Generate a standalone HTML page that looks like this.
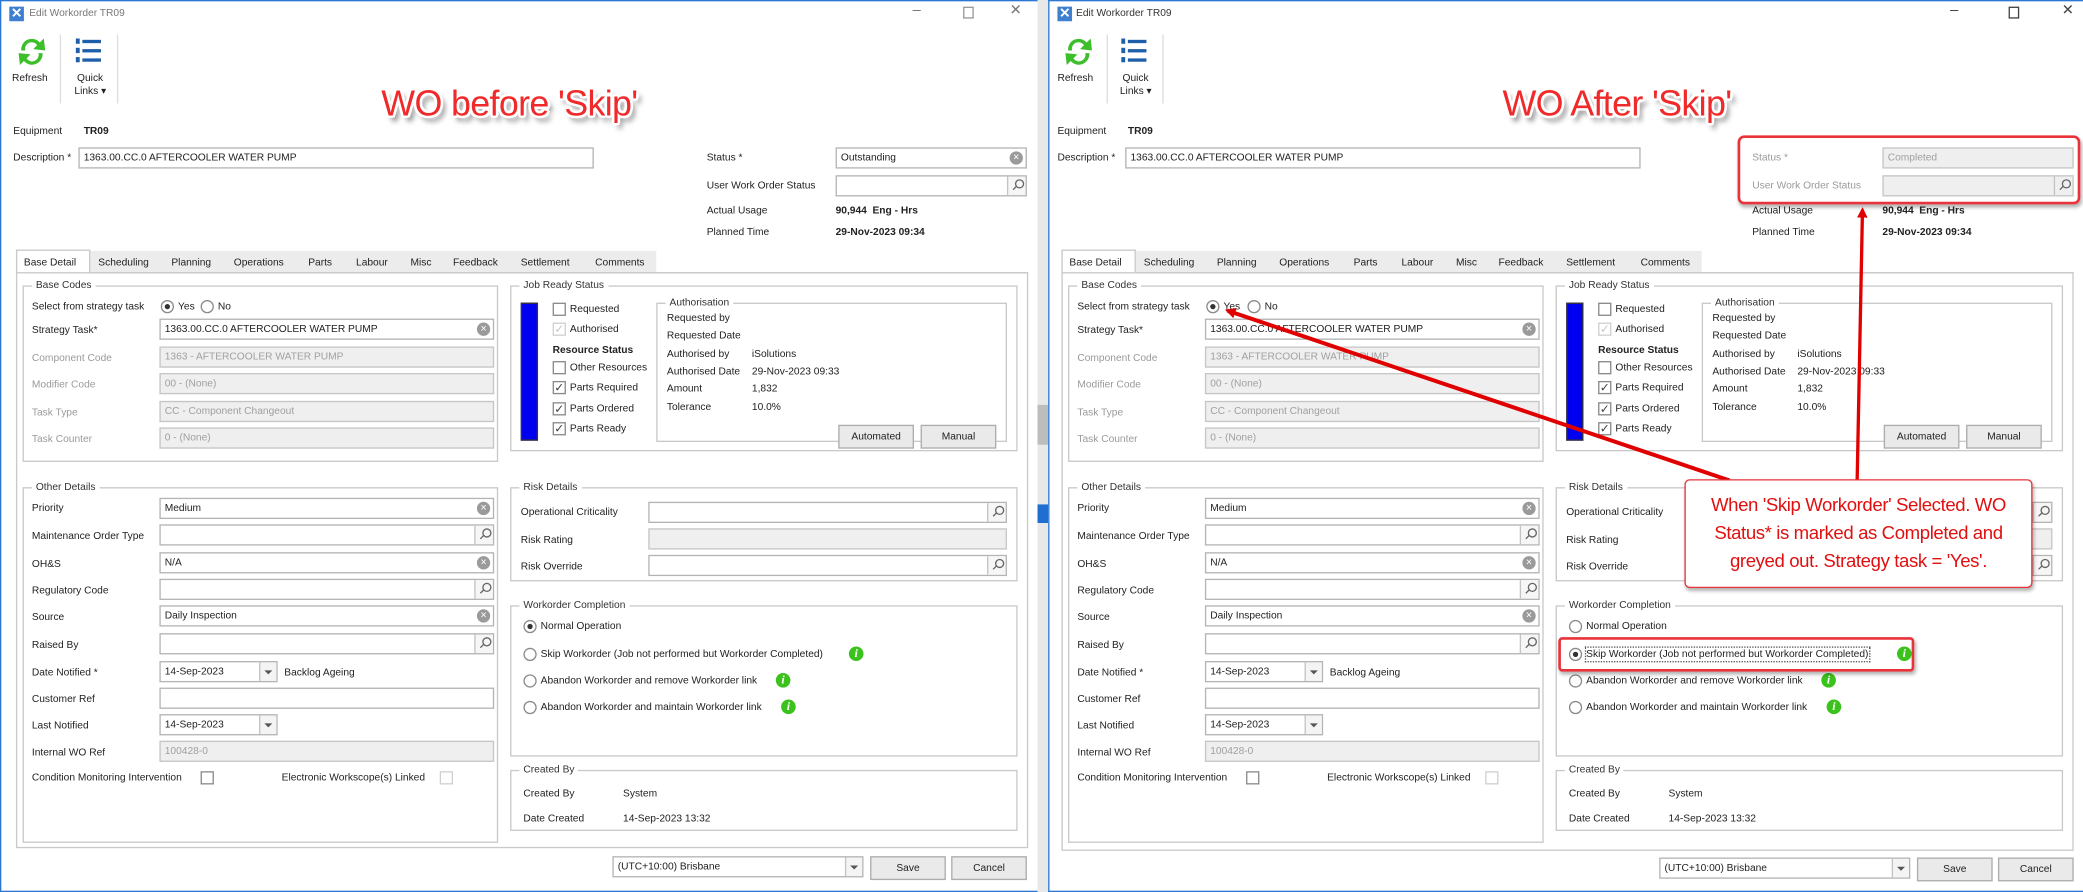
<!DOCTYPE html>
<html><head><meta charset="utf-8">
<style>
*{box-sizing:border-box;margin:0;padding:0}
html,body{width:2083px;height:892px;overflow:hidden;background:#fff}
#s{position:absolute;left:0;top:0;width:1568px;height:672px;transform:scale(1.32844,1.3274);transform-origin:0 0;font-family:"Liberation Sans",sans-serif;font-size:7.7px;color:#222}
.w{position:absolute;top:0;height:672px;background:#fff;border-left:1px solid #2b78d4;border-top:1px solid #2b78d4;border-bottom:1px solid #2b78d4;overflow:hidden}
.a{position:absolute;white-space:nowrap;line-height:10px}
.g{color:#9a9a9a}
.b{font-weight:bold}
.in{position:absolute;height:16px;border:1px solid #b4b4b4;background:#fff;line-height:14px;padding-left:3px;white-space:nowrap;overflow:hidden}
.dis{background:#efefef;color:#a0a0a0;border-color:#c6c6c6}
.clr{position:absolute;right:2px;top:2px;width:10px;height:10px;border-radius:50%;background:#9a9a9a;color:#fff;font-size:8px;line-height:10px;text-align:center}
.srch{position:absolute;right:0;top:0;width:14px;height:14px;border-left:1px solid #c4c4c4;background:#f6f6f6}
.srch:after{content:"";position:absolute;left:5px;top:2px;width:5px;height:5px;border:1px solid #666;border-radius:50%}
.srch:before{content:"";position:absolute;left:3px;top:8px;width:4px;height:1px;background:#666;transform:rotate(-45deg)}
.dd{position:absolute;right:0;top:0;width:13px;height:14px;border-left:1px solid #c4c4c4;background:#f4f4f4}
.dd:after{content:"";position:absolute;left:3px;top:6px;border-left:3px solid transparent;border-right:3px solid transparent;border-top:3px solid #555}
.grp{position:absolute;border:1px solid #c9c9c9}
.lg{position:absolute;top:-6px;left:6px;background:#fff;padding:0 3px;line-height:10px;white-space:nowrap;color:#333}
.rd{position:absolute;width:10px;height:10px;border:1px solid #8a8a8a;border-radius:50%;background:#fff}
.rd.on:after{content:"";position:absolute;left:2px;top:2px;width:4px;height:4px;border-radius:50%;background:#333}
.cb{position:absolute;width:10px;height:10px;border:1px solid #8a8a8a;background:#fff;font-size:9px;line-height:8px;text-align:center;color:#444}
.cb.lt{border-color:#d0d0d0;color:#c8c8c8}
.info{position:absolute;width:11px;height:11px;border-radius:50%;background:#3cc21c;color:#fff;font-weight:bold;font-style:italic;font-family:"Liberation Serif",serif;font-size:9px;line-height:11px;text-align:center}
.btn{position:absolute;height:18px;border:1px solid #adadad;background:#eaeaea;text-align:center;line-height:16px}
.tabs{position:absolute;left:11px;top:188px;width:482px;height:16px;background:#ececec}
.tab{position:absolute;top:192px;line-height:10px;white-space:nowrap}
.big{position:absolute;font-size:27px;color:#f02a2a;white-space:nowrap;letter-spacing:-0.5px;text-shadow:2px 0 0 #fff,-2px 0 0 #fff,0 2px 0 #fff,0 -2px 0 #fff,1.5px 1.5px 0 #fff,-1.5px -1.5px 0 #fff,1.5px -1.5px 0 #fff,-1.5px 1.5px 0 #fff,3px 4px 4px rgba(0,0,0,.55)}
</style></head><body><div id="s">

<div style="position:absolute;left:780px;top:0;width:10px;height:672px;background:#e8e8e8"></div>
<div style="position:absolute;left:780px;top:305px;width:10px;height:30px;background:#bdbdbd"></div>
<div style="position:absolute;left:780px;top:380px;width:10px;height:14px;background:#1f6fd0"></div>

<!-- ================= LEFT WINDOW ================= -->
<div class="w" style="left:0;width:781px">
 <div style="position:absolute;left:6px;top:4px;width:11px;height:11px;background:#3f7fd0;color:#fff;font-size:10px;line-height:11px;text-align:center;font-weight:bold">✕</div>
 <div class="a" style="left:21px;top:4px;color:#777">Edit Workorder TR09</div>
 <div class="a" style="left:686px;top:2px;color:#777;font-size:11px">–</div>
 <div style="position:absolute;left:724px;top:4px;width:8px;height:9px;border:1px solid #999"></div>
 <div class="a" style="left:759px;top:2px;color:#777;font-size:11px">✕</div>
 <svg style="position:absolute;left:11px;top:25px" width="24" height="26" viewBox="0 0 24 26"><path d="M4 12 A8 8 0 0 1 18 6 L21 3 L22 12 L13 11 L16 8 A5 5 0 0 0 7 12 Z" fill="#3cbf2a"/><path d="M20 14 A8 8 0 0 1 6 20 L3 23 L2 14 L11 15 L8 18 A5 5 0 0 0 17 14 Z" fill="#3cbf2a"/></svg>
 <div class="a" style="left:8px;top:53px">Refresh</div>
 <div style="position:absolute;left:44px;top:25px;width:1px;height:52px;background:#ddd"></div>
 <svg style="position:absolute;left:56px;top:28px" width="20" height="18"><rect x="0" y="0" width="3" height="4" fill="#1d5fa8"/><rect x="5" y="1" width="14" height="2.5" fill="#1d5fa8"/><rect x="0" y="7" width="3" height="4" fill="#1d5fa8"/><rect x="5" y="8" width="14" height="2.5" fill="#1d5fa8"/><rect x="0" y="14" width="3" height="4" fill="#1d5fa8"/><rect x="5" y="15" width="14" height="2.5" fill="#1d5fa8"/></svg>
 <div class="a" style="left:57px;top:53px">Quick</div>
 <div class="a" style="left:55px;top:63px">Links ▾</div>
 <div style="position:absolute;left:87px;top:25px;width:1px;height:52px;background:#ddd"></div>
 <div class="big" style="left:286px;top:62px">WO before 'Skip'</div>
 <div class="a" style="left:9px;top:93px">Equipment</div><div class="a b" style="left:62px;top:93px">TR09</div>
 <div class="a" style="left:9px;top:113px">Description *</div>
 <div class="in" style="left:58px;top:110px;width:388px">1363.00.CC.0 AFTERCOOLER WATER PUMP</div>
 <div class="a" style="left:531px;top:113px">Status *</div>
 <div class="in" style="left:628px;top:110px;width:144px">Outstanding<span class="clr">×</span></div>
 <div class="a" style="left:531px;top:134px">User Work Order Status</div>
 <div class="in" style="left:628px;top:131px;width:144px"><span class="srch"></span></div>
 <div class="a" style="left:531px;top:153px">Actual Usage</div><div class="a b" style="left:628px;top:153px">90,944&nbsp; Eng - Hrs</div>
 <div class="a" style="left:531px;top:169px">Planned Time</div><div class="a b" style="left:628px;top:169px">29-Nov-2023 09:34</div>
 <div class="tabs"></div>
 <div style="position:absolute;left:11px;top:187px;width:56px;height:18px;background:#fff;border:1px solid #c9c9c9;border-bottom:none"></div>
 <div class="tab" style="left:17px">Base Detail</div><div class="tab" style="left:73px">Scheduling</div><div class="tab" style="left:128px">Planning</div><div class="tab" style="left:175px">Operations</div><div class="tab" style="left:231px">Parts</div><div class="tab" style="left:267px">Labour</div><div class="tab" style="left:308px">Misc</div><div class="tab" style="left:340px">Feedback</div><div class="tab" style="left:391px">Settlement</div><div class="tab" style="left:447px">Comments</div>
 <div style="position:absolute;left:11px;top:204px;width:762px;height:434px;border:1px solid #c9c9c9"></div>
 <div style="position:absolute;left:67px;top:204px;width:706px;height:1px;background:#c9c9c9"></div>
 <div class="grp" style="left:16px;top:214px;width:358px;height:133px"><span class="lg">Base Codes</span></div>
 <div class="a" style="left:23px;top:225px">Select from strategy task</div>
 <div class="rd on" style="left:120px;top:225px"></div><div class="a" style="left:133px;top:225px">Yes</div>
 <div class="rd" style="left:150px;top:225px"></div><div class="a" style="left:163px;top:225px">No</div>
 <div class="a" style="left:23px;top:243px">Strategy Task*</div><div class="in" style="left:119px;top:239px;width:252px">1363.00.CC.0 AFTERCOOLER WATER PUMP<span class="clr">×</span></div>
 <div class="a g" style="left:23px;top:264px">Component Code</div><div class="in dis" style="left:119px;top:260px;width:252px">1363 - AFTERCOOLER WATER PUMP</div>
 <div class="a g" style="left:23px;top:284px">Modifier Code</div><div class="in dis" style="left:119px;top:280px;width:252px">00 - (None)</div>
 <div class="a g" style="left:23px;top:305px">Task Type</div><div class="in dis" style="left:119px;top:301px;width:252px">CC - Component Changeout</div>
 <div class="a g" style="left:23px;top:325px">Task Counter</div><div class="in dis" style="left:119px;top:321px;width:252px">0 - (None)</div>
 <div class="grp" style="left:16px;top:366px;width:358px;height:268px"><span class="lg">Other Details</span></div>
 <div class="a" style="left:23px;top:377px">Priority</div><div class="in" style="left:119px;top:374px;width:252px">Medium<span class="clr">×</span></div>
 <div class="a" style="left:23px;top:398px">Maintenance Order Type</div><div class="in" style="left:119px;top:394px;width:252px"><span class="srch"></span></div>
 <div class="a" style="left:23px;top:419px">OH&amp;S</div><div class="in" style="left:119px;top:415px;width:252px">N/A<span class="clr">×</span></div>
 <div class="a" style="left:23px;top:439px">Regulatory Code</div><div class="in" style="left:119px;top:435px;width:252px"><span class="srch"></span></div>
 <div class="a" style="left:23px;top:459px">Source</div><div class="in" style="left:119px;top:455px;width:252px">Daily Inspection<span class="clr">×</span></div>
 <div class="a" style="left:23px;top:480px">Raised By</div><div class="in" style="left:119px;top:476px;width:252px"><span class="srch"></span></div>
 <div class="a" style="left:23px;top:501px">Date Notified *</div><div class="in" style="left:119px;top:497px;width:89px">14-Sep-2023<span class="dd"></span></div><div class="a" style="left:213px;top:501px">Backlog Ageing</div>
 <div class="a" style="left:23px;top:521px">Customer Ref</div><div class="in" style="left:119px;top:517px;width:252px"></div>
 <div class="a" style="left:23px;top:541px">Last Notified</div><div class="in" style="left:119px;top:537px;width:89px">14-Sep-2023<span class="dd"></span></div>
 <div class="a" style="left:23px;top:561px">Internal WO Ref</div><div class="in dis" style="left:119px;top:557px;width:252px">100428-0</div>
 <div class="a" style="left:23px;top:580px">Condition Monitoring Intervention</div><div class="cb" style="left:150px;top:580px"></div>
 <div class="a" style="left:211px;top:580px">Electronic Workscope(s) Linked</div><div class="cb lt" style="left:330px;top:580px"></div>
 <div class="grp" style="left:383px;top:214px;width:382px;height:125px"><span class="lg">Job Ready Status</span></div>
 <div style="position:absolute;left:391px;top:227px;width:13px;height:104px;background:#0000f0;border:1px solid #333"></div>
 <div class="cb" style="left:415px;top:227px"></div><div class="a" style="left:428px;top:227px">Requested</div>
 <div class="cb lt" style="left:415px;top:242px">✓</div><div class="a" style="left:428px;top:242px">Authorised</div>
 <div class="a b" style="left:415px;top:258px">Resource Status</div>
 <div class="cb" style="left:415px;top:271px"></div><div class="a" style="left:428px;top:271px">Other Resources</div>
 <div class="cb" style="left:415px;top:286px">✓</div><div class="a" style="left:428px;top:286px">Parts Required</div>
 <div class="cb" style="left:415px;top:302px">✓</div><div class="a" style="left:428px;top:302px">Parts Ordered</div>
 <div class="cb" style="left:415px;top:317px">✓</div><div class="a" style="left:428px;top:317px">Parts Ready</div>
 <div class="grp" style="left:493px;top:227px;width:264px;height:105px"><span class="lg">Authorisation</span></div>
 <div class="a" style="left:501px;top:234px">Requested by</div>
 <div class="a" style="left:501px;top:247px">Requested Date</div>
 <div class="a" style="left:501px;top:261px">Authorised by</div><div class="a" style="left:565px;top:261px">iSolutions</div>
 <div class="a" style="left:501px;top:274px">Authorised Date</div><div class="a" style="left:565px;top:274px">29-Nov-2023 09:33</div>
 <div class="a" style="left:501px;top:287px">Amount</div><div class="a" style="left:565px;top:287px">1,832</div>
 <div class="a" style="left:501px;top:301px">Tolerance</div><div class="a" style="left:565px;top:301px">10.0%</div>
 <div class="btn" style="left:630px;top:319px;width:57px">Automated</div>
 <div class="btn" style="left:692px;top:319px;width:57px">Manual</div>
 <div class="grp" style="left:383px;top:366px;width:382px;height:71px"><span class="lg">Risk Details</span></div>
 <div class="a" style="left:391px;top:380px">Operational Criticality</div><div class="in" style="left:487px;top:377px;width:270px"><span class="srch"></span></div>
 <div class="a" style="left:391px;top:401px">Risk Rating</div><div class="in dis" style="left:487px;top:397px;width:270px"></div>
 <div class="a" style="left:391px;top:421px">Risk Override</div><div class="in" style="left:487px;top:417px;width:270px"><span class="srch"></span></div>
 <div class="grp" style="left:383px;top:455px;width:382px;height:114px"><span class="lg">Workorder Completion</span></div>
 <div class="rd on" style="left:393px;top:466px"></div><div class="a" style="left:406px;top:466px">Normal Operation</div>
 <div class="rd" style="left:393px;top:487px"></div><div class="a" style="left:406px;top:487px">Skip Workorder (Job not performed but Workorder Completed)</div><div class="info" style="left:638px;top:486px">i</div>
 <div class="rd" style="left:393px;top:507px"></div><div class="a" style="left:406px;top:507px">Abandon Workorder and remove Workorder link</div><div class="info" style="left:583px;top:506px">i</div>
 <div class="rd" style="left:393px;top:527px"></div><div class="a" style="left:406px;top:527px">Abandon Workorder and maintain Workorder link</div><div class="info" style="left:587px;top:526px">i</div>
 <div class="grp" style="left:383px;top:579px;width:382px;height:46px"><span class="lg">Created By</span></div>
 <div class="a" style="left:393px;top:592px">Created By</div><div class="a" style="left:468px;top:592px">System</div>
 <div class="a" style="left:393px;top:611px">Date Created</div><div class="a" style="left:468px;top:611px">14-Sep-2023 13:32</div>
 <div class="in" style="left:460px;top:644px;width:189px">(UTC+10:00) Brisbane<span class="dd"></span></div>
 <div class="btn" style="left:654px;top:644px;width:57px">Save</div>
 <div class="btn" style="left:715px;top:644px;width:57px">Cancel</div>
</div>

<!-- ================= RIGHT WINDOW ================= -->
<div class="w" style="left:789px;width:779px">
 <div style="position:absolute;left:6px;top:4px;width:11px;height:11px;background:#3f7fd0;color:#fff;font-size:10px;line-height:11px;text-align:center;font-weight:bold">✕</div>
 <div class="a" style="left:20px;top:4px;color:#333">Edit Workorder TR09</div>
 <div class="a" style="left:678px;top:2px;color:#444;font-size:11px">–</div>
 <div style="position:absolute;left:722px;top:4px;width:8px;height:9px;border:1px solid #444"></div>
 <div class="a" style="left:762px;top:2px;color:#444;font-size:11px">✕</div>
 <svg style="position:absolute;left:10px;top:25px" width="24" height="26" viewBox="0 0 24 26"><path d="M4 12 A8 8 0 0 1 18 6 L21 3 L22 12 L13 11 L16 8 A5 5 0 0 0 7 12 Z" fill="#3cbf2a"/><path d="M20 14 A8 8 0 0 1 6 20 L3 23 L2 14 L11 15 L8 18 A5 5 0 0 0 17 14 Z" fill="#3cbf2a"/></svg>
 <div class="a" style="left:6px;top:53px">Refresh</div>
 <div style="position:absolute;left:43px;top:25px;width:1px;height:52px;background:#ddd"></div>
 <svg style="position:absolute;left:54px;top:28px" width="20" height="18"><rect x="0" y="0" width="3" height="4" fill="#1d5fa8"/><rect x="5" y="1" width="14" height="2.5" fill="#1d5fa8"/><rect x="0" y="7" width="3" height="4" fill="#1d5fa8"/><rect x="5" y="8" width="14" height="2.5" fill="#1d5fa8"/><rect x="0" y="14" width="3" height="4" fill="#1d5fa8"/><rect x="5" y="15" width="14" height="2.5" fill="#1d5fa8"/></svg>
 <div class="a" style="left:55px;top:53px">Quick</div>
 <div class="a" style="left:53px;top:63px">Links ▾</div>
 <div style="position:absolute;left:85px;top:25px;width:1px;height:52px;background:#ddd"></div>
 <div class="big" style="left:341px;top:62px">WO After 'Skip'</div>
 <div class="a" style="left:6px;top:93px">Equipment</div><div class="a b" style="left:59px;top:93px">TR09</div>
 <div class="a" style="left:6px;top:113px">Description *</div>
 <div class="in" style="left:57px;top:110px;width:388px">1363.00.CC.0 AFTERCOOLER WATER PUMP</div>
 <div class="a g" style="left:529px;top:113px">Status *</div>
 <div class="in dis" style="left:627px;top:110px;width:144px">Completed</div>
 <div class="a g" style="left:529px;top:134px">User Work Order Status</div>
 <div class="in dis" style="left:627px;top:131px;width:144px"><span class="srch" style="background:#efefef"></span></div>
 <div class="a" style="left:529px;top:153px">Actual Usage</div><div class="a b" style="left:627px;top:153px">90,944&nbsp; Eng - Hrs</div>
 <div class="a" style="left:529px;top:169px">Planned Time</div><div class="a b" style="left:627px;top:169px">29-Nov-2023 09:34</div>
 <div class="tabs" style="left:9px"></div>
 <div style="position:absolute;left:9px;top:187px;width:56px;height:18px;background:#fff;border:1px solid #c9c9c9;border-bottom:none"></div>
 <div class="tab" style="left:15px">Base Detail</div><div class="tab" style="left:71px">Scheduling</div><div class="tab" style="left:126px">Planning</div><div class="tab" style="left:173px">Operations</div><div class="tab" style="left:229px">Parts</div><div class="tab" style="left:265px">Labour</div><div class="tab" style="left:306px">Misc</div><div class="tab" style="left:338px">Feedback</div><div class="tab" style="left:389px">Settlement</div><div class="tab" style="left:445px">Comments</div>
 <div style="position:absolute;left:9px;top:204px;width:762px;height:436px;border:1px solid #c9c9c9"></div>
 <div style="position:absolute;left:65px;top:204px;width:706px;height:1px;background:#c9c9c9"></div>
 <div class="grp" style="left:14px;top:214px;width:358px;height:133px"><span class="lg">Base Codes</span></div>
 <div class="a" style="left:21px;top:225px">Select from strategy task</div>
 <div class="rd on" style="left:118px;top:225px"></div><div class="a" style="left:131px;top:225px">Yes</div>
 <div class="rd" style="left:149px;top:225px"></div><div class="a" style="left:162px;top:225px">No</div>
 <div class="a" style="left:21px;top:243px">Strategy Task*</div><div class="in" style="left:117px;top:239px;width:252px">1363.00.CC.0 AFTERCOOLER WATER PUMP<span class="clr">×</span></div>
 <div class="a g" style="left:21px;top:264px">Component Code</div><div class="in dis" style="left:117px;top:260px;width:252px">1363 - AFTERCOOLER WATER PUMP</div>
 <div class="a g" style="left:21px;top:284px">Modifier Code</div><div class="in dis" style="left:117px;top:280px;width:252px">00 - (None)</div>
 <div class="a g" style="left:21px;top:305px">Task Type</div><div class="in dis" style="left:117px;top:301px;width:252px">CC - Component Changeout</div>
 <div class="a g" style="left:21px;top:325px">Task Counter</div><div class="in dis" style="left:117px;top:321px;width:252px">0 - (None)</div>
 <div class="grp" style="left:14px;top:366px;width:358px;height:268px"><span class="lg">Other Details</span></div>
 <div class="a" style="left:21px;top:377px">Priority</div><div class="in" style="left:117px;top:374px;width:252px">Medium<span class="clr">×</span></div>
 <div class="a" style="left:21px;top:398px">Maintenance Order Type</div><div class="in" style="left:117px;top:394px;width:252px"><span class="srch"></span></div>
 <div class="a" style="left:21px;top:419px">OH&amp;S</div><div class="in" style="left:117px;top:415px;width:252px">N/A<span class="clr">×</span></div>
 <div class="a" style="left:21px;top:439px">Regulatory Code</div><div class="in" style="left:117px;top:435px;width:252px"><span class="srch"></span></div>
 <div class="a" style="left:21px;top:459px">Source</div><div class="in" style="left:117px;top:455px;width:252px">Daily Inspection<span class="clr">×</span></div>
 <div class="a" style="left:21px;top:480px">Raised By</div><div class="in" style="left:117px;top:476px;width:252px"><span class="srch"></span></div>
 <div class="a" style="left:21px;top:501px">Date Notified *</div><div class="in" style="left:117px;top:497px;width:89px">14-Sep-2023<span class="dd"></span></div><div class="a" style="left:211px;top:501px">Backlog Ageing</div>
 <div class="a" style="left:21px;top:521px">Customer Ref</div><div class="in" style="left:117px;top:517px;width:252px"></div>
 <div class="a" style="left:21px;top:541px">Last Notified</div><div class="in" style="left:117px;top:537px;width:89px">14-Sep-2023<span class="dd"></span></div>
 <div class="a" style="left:21px;top:561px">Internal WO Ref</div><div class="in dis" style="left:117px;top:557px;width:252px">100428-0</div>
 <div class="a" style="left:21px;top:580px">Condition Monitoring Intervention</div><div class="cb" style="left:148px;top:580px"></div>
 <div class="a" style="left:209px;top:580px">Electronic Workscope(s) Linked</div><div class="cb lt" style="left:328px;top:580px"></div>
 <div class="grp" style="left:381px;top:214px;width:382px;height:125px"><span class="lg">Job Ready Status</span></div>
 <div style="position:absolute;left:389px;top:227px;width:13px;height:104px;background:#0000f0;border:1px solid #333"></div>
 <div class="cb" style="left:413px;top:227px"></div><div class="a" style="left:426px;top:227px">Requested</div>
 <div class="cb lt" style="left:413px;top:242px">✓</div><div class="a" style="left:426px;top:242px">Authorised</div>
 <div class="a b" style="left:413px;top:258px">Resource Status</div>
 <div class="cb" style="left:413px;top:271px"></div><div class="a" style="left:426px;top:271px">Other Resources</div>
 <div class="cb" style="left:413px;top:286px">✓</div><div class="a" style="left:426px;top:286px">Parts Required</div>
 <div class="cb" style="left:413px;top:302px">✓</div><div class="a" style="left:426px;top:302px">Parts Ordered</div>
 <div class="cb" style="left:413px;top:317px">✓</div><div class="a" style="left:426px;top:317px">Parts Ready</div>
 <div class="grp" style="left:491px;top:227px;width:264px;height:105px"><span class="lg">Authorisation</span></div>
 <div class="a" style="left:499px;top:234px">Requested by</div>
 <div class="a" style="left:499px;top:247px">Requested Date</div>
 <div class="a" style="left:499px;top:261px">Authorised by</div><div class="a" style="left:563px;top:261px">iSolutions</div>
 <div class="a" style="left:499px;top:274px">Authorised Date</div><div class="a" style="left:563px;top:274px">29-Nov-2023 09:33</div>
 <div class="a" style="left:499px;top:287px">Amount</div><div class="a" style="left:563px;top:287px">1,832</div>
 <div class="a" style="left:499px;top:301px">Tolerance</div><div class="a" style="left:563px;top:301px">10.0%</div>
 <div class="btn" style="left:628px;top:319px;width:57px">Automated</div>
 <div class="btn" style="left:690px;top:319px;width:57px">Manual</div>
 <div class="grp" style="left:381px;top:366px;width:382px;height:71px"><span class="lg">Risk Details</span></div>
 <div class="a" style="left:389px;top:380px">Operational Criticality</div><div class="in" style="left:485px;top:377px;width:270px"><span class="srch"></span></div>
 <div class="a" style="left:389px;top:401px">Risk Rating</div><div class="in dis" style="left:485px;top:397px;width:270px"></div>
 <div class="a" style="left:389px;top:421px">Risk Override</div><div class="in" style="left:485px;top:417px;width:270px"><span class="srch"></span></div>
 <div class="grp" style="left:381px;top:455px;width:382px;height:114px"><span class="lg">Workorder Completion</span></div>
 <div class="rd" style="left:391px;top:466px"></div><div class="a" style="left:404px;top:466px">Normal Operation</div>
 <div class="rd on" style="left:391px;top:487px"></div><div class="a" style="left:404px;top:487px;outline:1px dotted #555">Skip Workorder (Job not performed but Workorder Completed)</div><div class="info" style="left:638px;top:486px">i</div>
 <div class="rd" style="left:391px;top:507px"></div><div class="a" style="left:404px;top:507px">Abandon Workorder and remove Workorder link</div><div class="info" style="left:581px;top:506px">i</div>
 <div class="rd" style="left:391px;top:527px"></div><div class="a" style="left:404px;top:527px">Abandon Workorder and maintain Workorder link</div><div class="info" style="left:585px;top:526px">i</div>
 <div class="grp" style="left:381px;top:579px;width:382px;height:46px"><span class="lg">Created By</span></div>
 <div class="a" style="left:391px;top:592px">Created By</div><div class="a" style="left:466px;top:592px">System</div>
 <div class="a" style="left:391px;top:611px">Date Created</div><div class="a" style="left:466px;top:611px">14-Sep-2023 13:32</div>
 <div class="in" style="left:459px;top:645px;width:189px">(UTC+10:00) Brisbane<span class="dd"></span></div>
 <div class="btn" style="left:653px;top:645px;width:57px">Save</div>
 <div class="btn" style="left:714px;top:645px;width:57px">Cancel</div>
</div>

<div style="position:absolute;left:1308px;top:102px;width:258px;height:52px;border:2px solid #e8333a;border-radius:5px;box-shadow:1px 2px 3px rgba(0,0,0,.3)"></div>
<div style="position:absolute;left:1173px;top:480px;width:268px;height:26px;border:2px solid #e8333a;border-radius:3px;box-shadow:1px 2px 3px rgba(0,0,0,.3)"></div>
<svg style="position:absolute;left:0;top:0" width="1568" height="672">
 <defs><marker id="ah" markerWidth="8" markerHeight="8" refX="6" refY="4" orient="auto" markerUnits="userSpaceOnUse"><path d="M0 0 L8 4 L0 8 Z" fill="#e00000"/></marker></defs>
 <line x1="1302" y1="362" x2="924" y2="234" stroke="#e00000" stroke-width="3" marker-end="url(#ah)"/>
 <line x1="1398" y1="362" x2="1402" y2="158" stroke="#e00000" stroke-width="2.5" marker-end="url(#ah)"/>
</svg>
<div style="position:absolute;left:1268px;top:361px;width:262px;height:82px;background:#fff;border:1.5px solid #e8333a;border-radius:4px;box-shadow:1px 2px 3px rgba(0,0,0,.3);color:#e01010;font-size:14px;line-height:21px;text-align:center;padding-top:8px;letter-spacing:-0.3px">When 'Skip Workorder' Selected. WO<br>Status* is marked as Completed and<br>greyed out. Strategy task = 'Yes'.</div>

</div></body></html>
